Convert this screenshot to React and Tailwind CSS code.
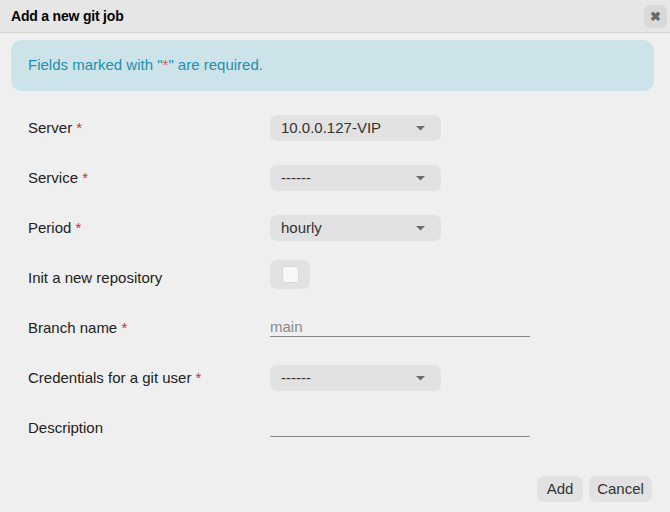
// Modal form for adding a git job. Rows are fixed 50px tall so labels and
// controls line up on a single grid; select controls are plain styled divs.
const ROWS = [
  { label: "Server", required: true, kind: "select", value: "10.0.0.127-VIP" },
  { label: "Service", required: true, kind: "select", value: "------" },
  { label: "Period", required: true, kind: "select", value: "hourly" },
  { label: "Init a new repository", kind: "checkbox" },
  { label: "Branch name", required: true, kind: "text", placeholder: "main" },
  { label: "Credentials for a git user", required: true, kind: "select", value: "------" },
  { label: "Description", kind: "text", placeholder: "" },
];

function Caret() {
  return (
    <svg width="9" height="5" viewBox="0 0 9 5" className="fill-[#6b6b6b]">
      <path d="M0 0h9L4.5 4.5z" />
    </svg>
  );
}

function Control({ row }) {
  if (row.kind === "select") {
    return (
      <div className="flex h-[26px] w-[171px] items-center justify-between rounded-[7px] bg-[#e2e2e2] pl-[11px] pr-[16px] text-[15px] text-[#333]">
        <span>{row.value}</span>
        <Caret />
      </div>
    );
  }
  if (row.kind === "checkbox") {
    return (
      <div className="mb-[8px] flex h-[29px] w-[40px] items-center justify-center rounded-[7px] bg-[#e2e2e2]">
        <div className="h-[17px] w-[17px] rounded-[3px] border border-[#d8d8d8] bg-[#f8f8f8]" />
      </div>
    );
  }
  return (
    <div className="mb-[2px] w-[260px] border-b border-[#888] text-[15px] leading-[18px] text-[#888]">
      {row.placeholder || "\u00a0"}
    </div>
  );
}

export default function App() {
  return (
    <div className="h-[512px] w-[670px] bg-[#efefef] font-['Liberation_Sans',Arial,sans-serif] text-[#222]">
      <div className="flex h-[33px] items-center justify-between border-b border-[#d6d6d6] bg-[#e6e6e6] pl-[11px] pr-[3px]">
        <span className="text-[14px] font-bold tracking-[-0.2px] text-black">Add a new git job</span>
        <div className="flex h-[23px] w-[23px] items-center justify-center rounded-[6px] bg-[#d9d9d9] text-[13px] font-bold leading-none text-[#6a6a6a]">
          ✖
        </div>
      </div>

      <div className="px-[11px] pt-[7px] pr-[16px]">
        <div className="flex h-[51px] items-center rounded-[11px] bg-[#cde3ea] px-[17px] text-[15px] text-[#1f8fad]">
          Fields marked with "<span className="text-[#d9534f]">*</span>" are required.
        </div>
      </div>

      <div className="mt-[12px] px-[28px]">
        {ROWS.map((row) => (
          <div key={row.label} className="flex h-[50px] items-center">
            <div className="w-[242px] text-[15px] text-[#222]">
              {row.label}
              {row.required && <span className="text-[#c9302c]"> *</span>}
            </div>
            <Control row={row} />
          </div>
        ))}
      </div>

      <div className="mt-[23px] flex justify-end gap-[6px] pr-[18px]">
        <button className="h-[26px] w-[46px] rounded-[7px] bg-[#e2e2e2] text-[15px] text-[#333]">Add</button>
        <button className="h-[26px] w-[63px] rounded-[7px] bg-[#e2e2e2] text-[15px] text-[#333]">Cancel</button>
      </div>
    </div>
  );
}
